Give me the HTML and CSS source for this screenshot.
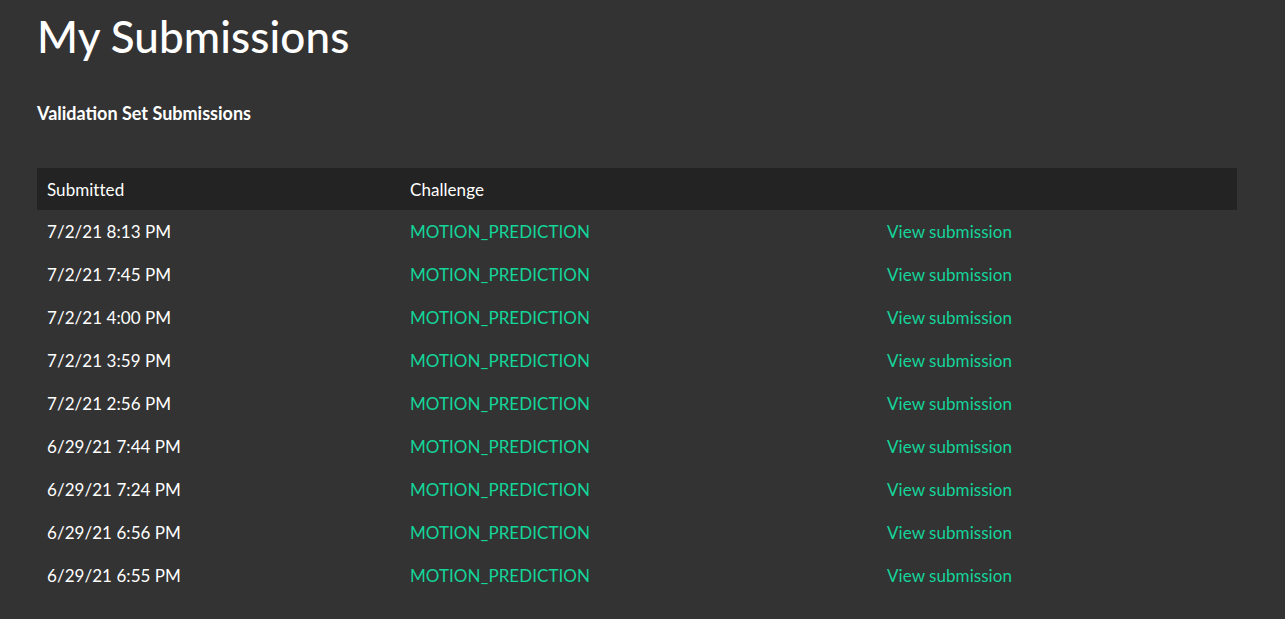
FILE: index.html
```html
<!DOCTYPE html>
<html>
<head>
<meta charset="utf-8">
<link rel="stylesheet" href="styles.css">
</head>
<body>
<main class="page">
  <h1 class="title">My Submissions</h1>
  <h2 class="subtitle">Validation Set Submissions</h2>
  <table class="subs">
    <thead>
      <tr><th class="c1">Submitted</th><th class="c2">Challenge</th><th class="c3"></th></tr>
    </thead>
    <tbody>
      <tr><td>7/2/21 8:13 PM</td><td class="green">MOTION_PREDICTION</td><td><a class="green" href="#">View submission</a></td></tr>
      <tr><td>7/2/21 7:45 PM</td><td class="green">MOTION_PREDICTION</td><td><a class="green" href="#">View submission</a></td></tr>
      <tr><td>7/2/21 4:00 PM</td><td class="green">MOTION_PREDICTION</td><td><a class="green" href="#">View submission</a></td></tr>
      <tr><td>7/2/21 3:59 PM</td><td class="green">MOTION_PREDICTION</td><td><a class="green" href="#">View submission</a></td></tr>
      <tr><td>7/2/21 2:56 PM</td><td class="green">MOTION_PREDICTION</td><td><a class="green" href="#">View submission</a></td></tr>
      <tr><td>6/29/21 7:44 PM</td><td class="green">MOTION_PREDICTION</td><td><a class="green" href="#">View submission</a></td></tr>
      <tr><td>6/29/21 7:24 PM</td><td class="green">MOTION_PREDICTION</td><td><a class="green" href="#">View submission</a></td></tr>
      <tr><td>6/29/21 6:56 PM</td><td class="green">MOTION_PREDICTION</td><td><a class="green" href="#">View submission</a></td></tr>
      <tr><td>6/29/21 6:55 PM</td><td class="green">MOTION_PREDICTION</td><td><a class="green" href="#">View submission</a></td></tr>
    </tbody>
  </table>
</main>
</body>
</html>
```

FILE: styles.css
```css
html, body {
  margin: 0;
  padding: 0;
  background: #333333;
  color: #ffffff;
  font-family: Lato, "Noto Sans", sans-serif;
}
.page {
  padding: 10px 48px 0 37px;
}
.title {
  margin: 0;
  font-size: 44px;
  font-weight: 500;
  line-height: 52px;
  letter-spacing: 0.1px;
}
.subtitle {
  margin: 40px 0 0 0;
  font-size: 18px;
  font-weight: 700;
  line-height: 22px;
}
.subs {
  margin-top: 44px;
  width: 1200px;
  border-collapse: collapse;
  table-layout: fixed;
  font-size: 17px;
  letter-spacing: 0.05px;
}
.subs th {
  background: #232323;
  font-weight: 400;
  text-align: left;
  height: 42px;
  padding: 0 10px;
}
.subs td {
  height: 43px;
  padding: 0 10px;
}
.c1 { width: 343px; }
.c2 { width: 457px; }
.green {
  color: #14d59a;
  text-decoration: none;
}
```
